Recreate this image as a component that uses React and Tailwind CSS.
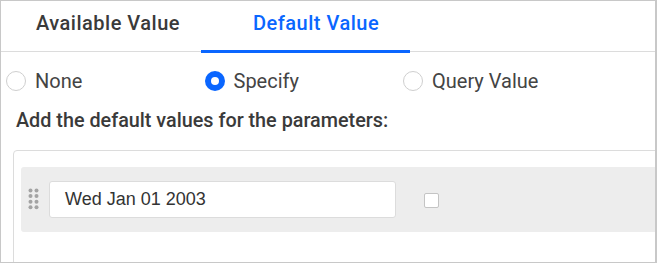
export default function App() {
  const Radio = ({ checked, label }) => (
    <div className="flex items-center w-[198.5px]">
      {checked ? (
        <span className="w-[20px] h-[20px] rounded-full bg-[#0a66ff] flex items-center justify-center">
          <span className="w-[8px] h-[8px] rounded-full bg-white" />
        </span>
      ) : (
        <span className="w-[20px] h-[20px] rounded-full border border-[#cfcfcf] bg-white" />
      )}
      <span className="ml-[9px] text-[20px] text-[#444] leading-none">{label}</span>
    </div>
  );
  return (
    <div className="w-[657px] h-[263px] border border-[#c8c8c8] border-r-2 overflow-hidden bg-white font-['Roboto',sans-serif]">
      <div className="flex h-[51px] border-b border-[#dcdcdc]">
        <div className="w-[200px] pl-[35px] pt-[7px] text-[20px] font-medium tracking-[0.5px] text-[#3a3a3a]">
          Available Value
        </div>
        <div className="relative w-[209px] pl-[52px] pt-[7px] text-[20px] font-medium tracking-[0.5px] text-[#0a66ff]">
          Default Value
          <span className="absolute left-0 right-0 bottom-[-2px] h-[3px] bg-[#0a66ff]" />
        </div>
      </div>
      <div className="flex items-center pl-[5px] mt-[19px] h-[20px]">
        <Radio label="None" />
        <Radio checked label="Specify" />
        <Radio label="Query Value" />
      </div>
      <div className="pl-[15px] mt-[20px] text-[19.8px] font-medium text-[#3a3a3a] leading-none">
        Add the default values for the parameters:
      </div>
      <div className="ml-[12px] mt-[19px] w-[700px] h-[150px] border border-[#dcdcdc] rounded-tl-[4px] pt-[16px] pl-[7px]">
        <div className="h-[65px] bg-[#ededed] rounded-[3px] flex items-center">
          <svg width="12" height="22" viewBox="0 0 12 22" className="ml-[7px]">
            {[0, 1, 2, 3].map((r) =>
              [0, 1].map((c) => (
                <circle key={r + "-" + c} cx={2.5 + c * 6} cy={2.5 + r * 5.6} r="2" fill="#a3a3a3" />
              ))
            )}
          </svg>
          <div className="ml-[9px] w-[347px] h-[37px] bg-white border border-[#dcdcdc] rounded-[3px] flex items-center pl-[15px] font-['Liberation_Sans',Arial,sans-serif] text-[18px] text-[#333]">
            Wed Jan 01 2003
          </div>
          <div className="ml-[28px] w-[15px] h-[15px] bg-white border border-[#c4c4c4] rounded-[2px] mt-[2px]" />
        </div>
      </div>
    </div>
  );
}
